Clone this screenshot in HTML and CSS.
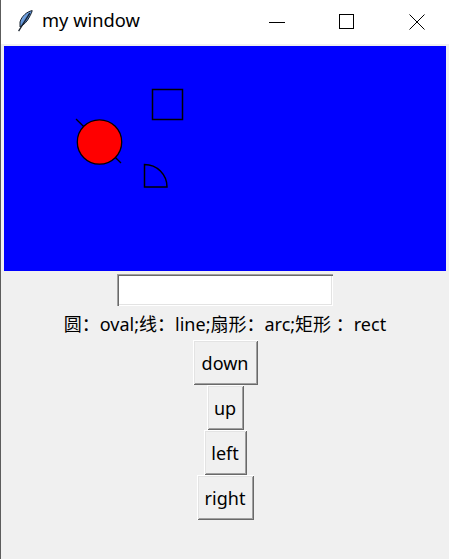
FILE: index.html
```html
<!DOCTYPE html>
<html lang="zh">
<head>
<meta charset="utf-8">
<title>my window</title>
<link rel="stylesheet" href="styles.css">
</head>
<body>
<div class="window">
  <header class="titlebar">
    <svg class="feather" width="16" height="22" viewBox="0 0 16 22">
      <defs>
        <linearGradient id="fg" x1="0" y1="0" x2="1" y2="1">
          <stop offset="0" stop-color="#b4d4f6"/>
          <stop offset="0.5" stop-color="#5a8fd6"/>
          <stop offset="1" stop-color="#24508f"/>
        </linearGradient>
      </defs>
      <path d="M15.2 0.6 C10 1.6 4.6 6.2 3 12 L3 17 C7 14.8 10.4 11.2 12.4 7 C13.8 4.4 14.8 2.6 15.2 0.6 Z" fill="url(#fg)" stroke="#18222e" stroke-width="1"/>
      <path d="M12.8 3.2 L1.6 21.2" stroke="#18222e" stroke-width="1.3" fill="none"/>
    </svg>
    <span class="title">my window</span>
    <div class="controls">
      <span class="ctl ctl-min"><svg width="16" height="16" viewBox="0 0 16 16"><path d="M0 8.5 H16" stroke="#000" stroke-width="1"/></svg></span>
      <span class="ctl ctl-max"><svg width="16" height="16" viewBox="0 0 16 16"><rect x="0.5" y="0.5" width="14" height="14" fill="none" stroke="#000" stroke-width="1"/></svg></span>
      <span class="ctl ctl-close"><svg width="16" height="16" viewBox="0 0 16 16"><path d="M0.5 0.5 L15.5 15.5 M15.5 0.5 L0.5 15.5" stroke="#000" stroke-width="1"/></svg></span>
    </div>
  </header>
  <main class="client">
    <div class="canvas">
      <svg width="442" height="225" viewBox="0 0 442 225">
        <line x1="72" y1="73" x2="117" y2="117" stroke="#000" stroke-width="1.3"/>
        <circle cx="95.5" cy="96" r="22.2" fill="#ff0000" stroke="#000" stroke-width="1.3"/>
        <rect x="148.5" y="43.5" width="30" height="30" fill="none" stroke="#000" stroke-width="1.5"/>
        <path d="M140.5 141 L140.5 118.5 A22.5 22.5 0 0 1 163 141 Z" fill="none" stroke="#000" stroke-width="1.5"/>
      </svg>
    </div>
    <input class="entry" type="text">
    <div class="label">圆：oval;线：line;扇形：arc;矩形 ：rect</div>
    <div class="buttons">
      <button class="btn btn-down">down</button>
      <button class="btn btn-up">up</button>
      <button class="btn btn-left">left</button>
      <button class="btn btn-right">right</button>
    </div>
  </main>
</div>
</body>
</html>
```

FILE: styles.css
```css
html, body {
  margin: 0;
  padding: 0;
}
body {
  width: 449px;
  height: 559px;
  background: #f0f0f0;
  overflow: hidden;
  font-family: "Noto Sans", "Noto Sans CJK SC", sans-serif;
  color: #000;
}
.window {
  box-sizing: border-box;
  width: 449px;
  height: 559px;
  border-left: 1px solid #5c5c5c;
  display: flex;
  flex-direction: column;
  overflow: hidden;
}
.titlebar {
  height: 44px;
  background: #fff;
  display: flex;
  align-items: center;
  flex: none;
}
.feather {
  margin-left: 16px;
  margin-top: -2px;
  flex: none;
}
.title {
  margin-left: 9px;
  font-size: 18.3px;
  line-height: 1;
  margin-top: -3px;
  flex: 1;
}
.controls {
  display: flex;
  align-items: center;
  height: 100%;
  margin-right: -3px;
}
.ctl {
  width: 70px;
  height: 100%;
  display: flex;
  align-items: center;
  justify-content: center;
}
.ctl svg { display: block; }
.client {
  flex: 1;
  display: flex;
  flex-direction: column;
  align-items: center;
}
.canvas {
  width: 442px;
  height: 225px;
  background: #0000ff;
  border: 2px solid #f0f0f0;
  flex: none;
}
.canvas svg { display: block; }
.entry {
  box-sizing: border-box;
  width: 216px;
  height: 32px;
  margin: 1px 0 0 0;
  padding: 0;
  border: none;
  outline: none;
  background: #fff;
  box-shadow: inset 1px 1px #a0a0a0, inset 2px 2px #696969, inset -1px -1px #fff, inset -2px -2px #e3e3e3;
}
.label {
  height: 34px;
  line-height: 36px;
  font-size: 18px;
  white-space: nowrap;
}
.buttons {
  display: flex;
  flex-direction: column;
  align-items: center;
}
.btn {
  box-sizing: border-box;
  height: 45px;
  padding: 0;
  margin: 0;
  border: none;
  background: #f0f0f0;
  font-family: "Noto Sans", sans-serif;
  font-size: 18px;
  color: #000;
  box-shadow: inset 1px 1px #fff, inset -1px -1px #696969, inset 2px 2px #e3e3e3, inset -2px -2px #a0a0a0;
}
.btn-down { width: 65px; }
.btn-up { width: 37px; }
.btn-left { width: 43px; }
.btn-right { width: 57px; }
```
